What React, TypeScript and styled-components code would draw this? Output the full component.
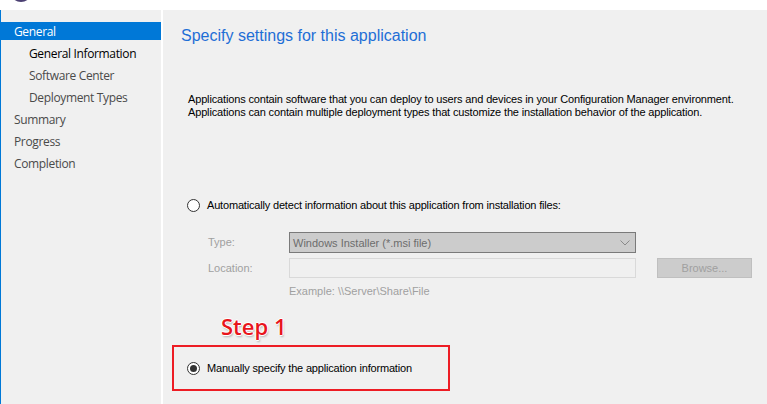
import styled, { createGlobalStyle } from "styled-components";

const GlobalStyle = createGlobalStyle`
  html, body {
    margin: 0;
    padding: 0;
    background: #f0f0f0;
  }
  * {
    box-sizing: border-box;
  }
`;

const Window = styled.div`
  width: 767px;
  height: 404px;
  overflow: hidden;
  display: flex;
  flex-direction: column;
  background: #f0f0f0;
  font-family: "Liberation Sans", Arial, sans-serif;
`;

const Banner = styled.div`
  height: 10px;
  flex: none;
  background: #ffffff;
  position: relative;
  overflow: hidden;
`;

const LogoCrop = styled.svg`
  position: absolute;
  left: 9px;
  top: -21px;
`;

const Body = styled.div`
  flex: 1;
  display: flex;
  min-height: 0;
`;

const Sidebar = styled.nav`
  width: 163px;
  flex: none;
  border-left: 1px solid #0078d7;
  border-right: 2px solid #ffffff;
  padding-top: 12px;
  display: flex;
  flex-direction: column;
  gap: 4px;
  font-family: "Open Sans", "Noto Sans", sans-serif;
  font-size: 12px;
  letter-spacing: -0.35px;
`;

const NavItem = styled.div<{ $active?: boolean; $current?: boolean; $sub?: boolean }>`
  height: 18px;
  line-height: 19px;
  padding-left: ${(p) => (p.$sub ? 28 : 13)}px;
  background: ${(p) => (p.$active ? "#0078d7" : "transparent")};
  color: ${(p) => (p.$active ? "#ffffff" : p.$current ? "#000000" : "#4a4a4a")};
  white-space: nowrap;
`;

const Content = styled.main`
  flex: 1;
  padding-left: 18px;
  display: flex;
  flex-direction: column;
`;

const Title = styled.h1`
  margin: 16px 0 0 0;
  font-family: "Liberation Sans", Arial, sans-serif;
  font-weight: normal;
  font-size: 16px;
  line-height: 20px;
  color: #1e6ed6;
`;

const Description = styled.p`
  margin: 47px 0 0 7px;
  font-size: 11px;
  line-height: 13px;
  letter-spacing: -0.15px;
  color: #000000;
`;

const RadioRow = styled.label`
  display: flex;
  align-items: center;
  gap: 7px;
  height: 16px;
  font-size: 11px;
  letter-spacing: -0.18px;
  color: #000000;
`;

const FirstOption = styled.div`
  margin: 78px 0 0 6px;
`;

const RadioDot = styled.span<{ $checked?: boolean }>`
  width: 13px;
  height: 13px;
  flex: none;
  border-radius: 50%;
  border: 1px solid #333333;
  background: #ffffff;
  display: flex;
  align-items: center;
  justify-content: center;
  &::after {
    content: "";
    width: 7px;
    height: 7px;
    border-radius: 50%;
    background: ${(p) => (p.$checked ? "#333333" : "transparent")};
  }
`;

const Form = styled.div`
  margin: 19px 0 0 27px;
  display: grid;
  grid-template-columns: 81px 347px 21px 95px;
  grid-auto-rows: auto;
  row-gap: 5px;
  font-size: 11px;
  color: #a0a0a0;
`;

const FieldLabel = styled.div`
  display: flex;
  align-items: center;
  height: 20px;
  grid-column: 1;
`;

const Select = styled.div`
  grid-column: 2;
  height: 21px;
  border: 1px solid #7a7a7a;
  background: #cccccc;
  color: #6d6d6d;
  display: flex;
  align-items: center;
  justify-content: space-between;
  padding: 0 5px 0 3px;
`;

const TextBox = styled.div`
  grid-column: 2;
  height: 20px;
  border: 1px solid #d9d9d9;
  background: #f0f0f0;
`;

const Button = styled.div`
  grid-column: 4;
  height: 20px;
  border: 1px solid #bfbfbf;
  background: #cccccc;
  color: #a0a0a0;
  display: flex;
  align-items: center;
  justify-content: center;
`;

const Hint = styled.div`
  grid-column: 2;
  margin-top: 1px;
  line-height: 14px;
`;

const StepLabel = styled.div`
  margin: 15px 0 0 40px;
  font-family: "Open Sans", "Noto Sans", sans-serif;
  font-weight: 600;
  font-size: 22px;
  line-height: 26px;
  color: #e8141c;
  text-shadow:
    1px 0 0 #fff, -1px 0 0 #fff, 0 1px 0 #fff, 0 -1px 0 #fff,
    1px 2px 2px rgba(0, 0, 0, 0.25);
`;

const Highlight = styled.div`
  margin: 6px 0 0 -9px;
  width: 278px;
  height: 46px;
  border: 2px solid #ed1c24;
  display: flex;
  align-items: center;
  padding-left: 13px;
`;

export default function App() {
  return (
    <>
      <GlobalStyle />
      <Window>
        <Banner>
          <LogoCrop width="24" height="24" viewBox="0 0 24 24">
            <ellipse cx="12" cy="12" rx="11" ry="11" fill="#4b3f72" />
          </LogoCrop>
        </Banner>
        <Body>
          <Sidebar>
            <NavItem $active>General</NavItem>
            <NavItem $sub $current>General Information</NavItem>
            <NavItem $sub>Software Center</NavItem>
            <NavItem $sub>Deployment Types</NavItem>
            <NavItem>Summary</NavItem>
            <NavItem>Progress</NavItem>
            <NavItem>Completion</NavItem>
          </Sidebar>
          <Content>
            <Title>Specify settings for this application</Title>
            <Description>
              Applications contain software that you can deploy to users and devices in your Configuration Manager environment.
              <br />
              Applications can contain multiple deployment types that customize the installation behavior of the application.
            </Description>
            <FirstOption>
              <RadioRow>
                <RadioDot />
                Automatically detect information about this application from installation files:
              </RadioRow>
            </FirstOption>
            <Form>
              <FieldLabel>Type:</FieldLabel>
              <Select>
                <span>Windows Installer (*.msi file)</span>
                <svg width="10" height="6" viewBox="0 0 10 6">
                  <path d="M0.5 0.5 L5 5 L9.5 0.5" fill="none" stroke="#8a8a8a" strokeWidth="1" />
                </svg>
              </Select>
              <FieldLabel>Location:</FieldLabel>
              <TextBox />
              <Button>Browse...</Button>
              <Hint>Example: \\Server\Share\File</Hint>
            </Form>
            <StepLabel>Step 1</StepLabel>
            <Highlight>
              <RadioRow>
                <RadioDot $checked />
                Manually specify the application information
              </RadioRow>
            </Highlight>
          </Content>
        </Body>
      </Window>
    </>
  );
}
